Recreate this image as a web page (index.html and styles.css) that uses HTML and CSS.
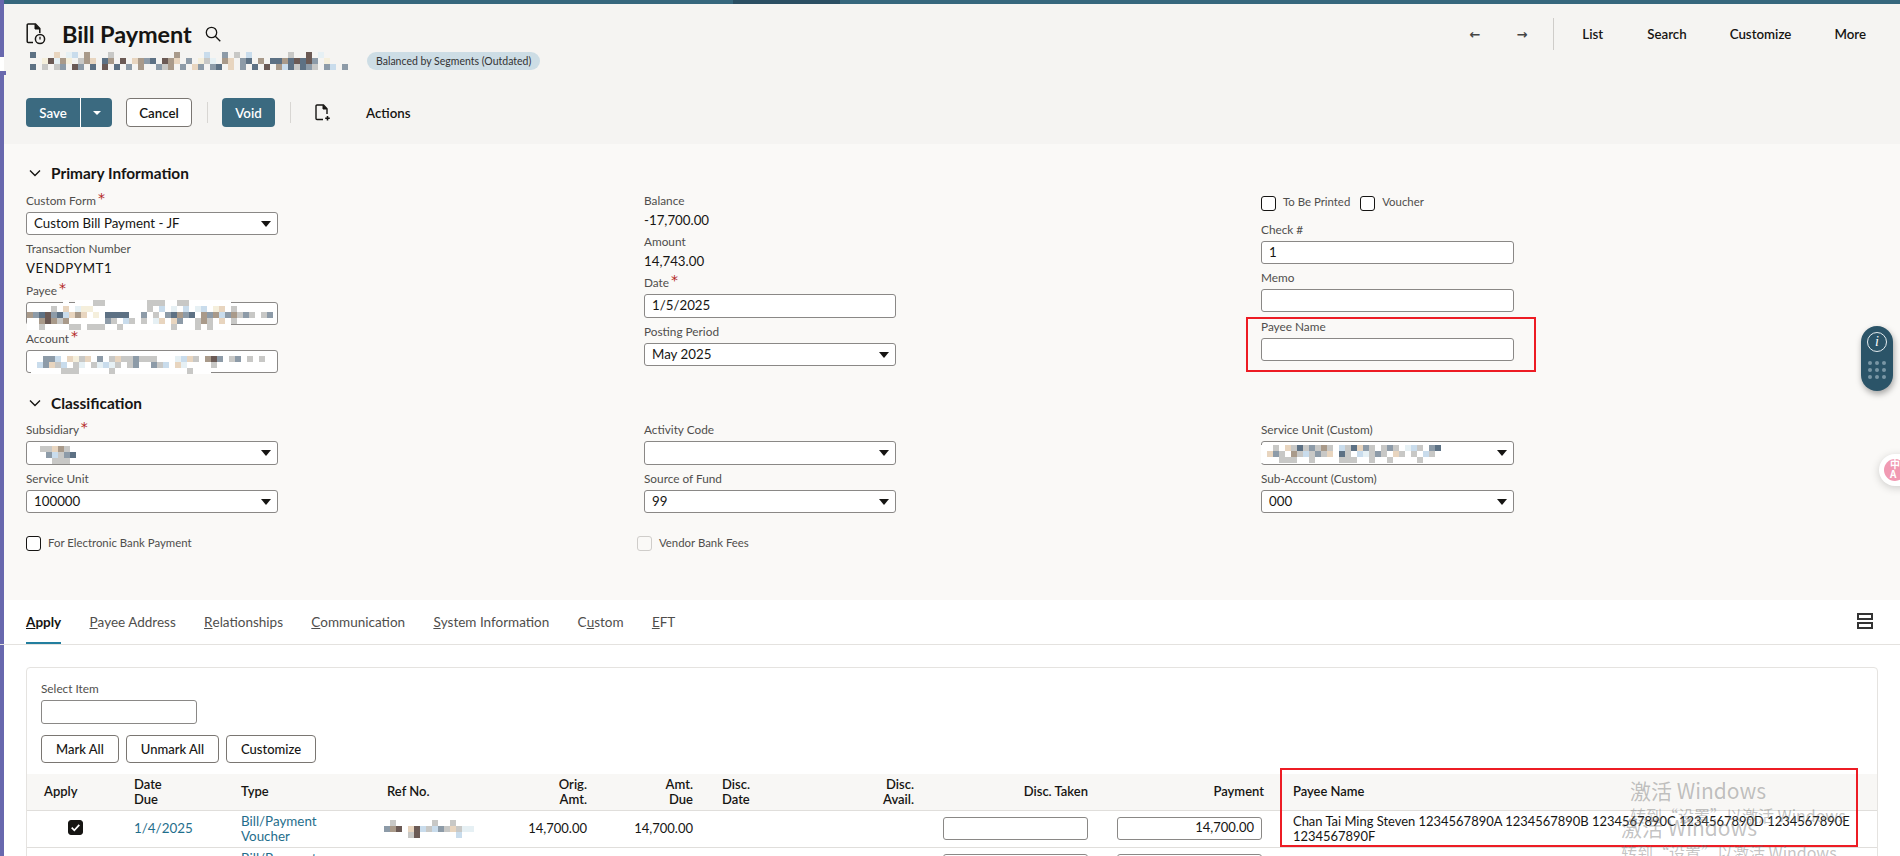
FILE: index.html
```html
<!DOCTYPE html>
<html lang="en">
<head>
    <meta charset="UTF-8">
    <title>Bill Payment</title>
    <link rel="stylesheet" href="styles.css">
</head>
<body>
    <div class="top-bar"><span class="top-bar-tab"></span></div>
    <div class="side-strip"><span class="strip-gap-a"></span><span class="strip-gap-b"></span></div>

    <header class="page-head">
        <div class="title-row">
            <div class="title-left">
                <svg class="title-icon" viewBox="0 0 20 22" fill="none" stroke="#161513" stroke-width="1.5">
                    <path d="M7 19.5H2.2a1 1 0 0 1-1-1V2a1 1 0 0 1 1-1h7.3l4.3 4.5V10"/>
                    <path d="M9 1.2V6h4.6" fill="#161513" stroke-width="1"/>
                    <circle cx="14" cy="16" r="4.6"/>
                    <path d="M14 13.7v2.9" stroke-width="1.3"/>
                </svg>
                <h1>Bill Payment</h1>
                <svg class="search-icon" viewBox="0 0 16 16" fill="none" stroke="#161513" stroke-width="1.3">
                    <circle cx="6.5" cy="6.5" r="5.2"/>
                    <path d="M10.3 10.3l5 5"/>
                </svg>
            </div>
            <nav class="head-nav">
                <span class="arrow">←</span>
                <span class="arrow arrow-next">→</span>
                <span class="nav-sep"></span>
                <a class="nav-link nav-list">List</a>
                <a class="nav-link">Search</a>
                <a class="nav-link">Customize</a>
                <a>More</a>
            </nav>
        </div>
        <div class="sub-row">
            <div class="mosaic mosaic-head" data-rows="h...c.gd.b...f..........b....d..a.f.d......f..e.g.|..iegbi.fbc.hb.e.cbah.ebc.a.ifg.bc.ah.b.hhbhehea.i.|h.f.fa.ea.h.e.h.a.b..afb.a.ca.ah.c.a.h.e.bdhfhaf.ad.a"></div>
            <span class="badge">Balanced by Segments (Outdated)</span>
        </div>
        <div class="action-row">
            <div class="split-btn">
                <button class="btn-primary btn-save">Save</button>
                <button class="btn-primary btn-caret"><span class="caret caret-white"></span></button>
            </div>
            <button class="btn-outline btn-cancel">Cancel</button>
            <span class="action-sep"></span>
            <button class="btn-primary btn-void">Void</button>
            <span class="action-sep"></span>
            <svg class="doc-icon" viewBox="0 0 16 17" fill="none" stroke="#161513" stroke-width="1.4">
                <path d="M8 15.5H2a1 1 0 0 1-1-1V2a1 1 0 0 1 1-1h6.5L12 4.7V10"/>
                <path d="M8 1.2V5h3.8" fill="#161513" stroke-width="1"/>
                <path d="M12.5 12v4.5M10.2 14.2h4.6" stroke-width="1.6"/>
            </svg>
            <span class="actions-link">Actions</span>
        </div>
    </header>

    <main class="record-form">
        <h2 class="section-title"><svg viewBox="0 0 12 8" fill="none" stroke="#161513" stroke-width="1.4"><path d="M1 1.5l5 5 5-5"/></svg>Primary Information</h2>
        <div class="form-grid">
            <div class="form-col">
                <div class="field">
                    <label>Custom Form <i class="req">*</i></label>
                    <div class="control">Custom Bill Payment - JF<span class="caret"></span></div>
                </div>
                <div class="field field-static field-static-wide">
                    <label>Transaction Number</label>
                    <div class="value value-code">VENDPYMT1</div>
                </div>
                <div class="field">
                    <label>Payee <i class="req">*</i></label>
                    <div class="control control-masked"><div class="mosaic mosaic-payee" data-rows="......w.wwwffwwwwwwwfffwwffwwwwwww........|....fwcwgiiwwwwwwwwwfwdwgwdwgdwicwfwwww.w.|baheahdcbcwiwhhhhwwawfwahbahwbabdabfafwfa|wwbebfbwwwwwwafwdfwfwgcwcawwfbfwcwfwwwwww|wwfwwwwffwfffwwfwwwwwwwwfwwwfwfwww......."></div></div>
                </div>
                <div class="field">
                    <label>Account <i class="req">*</i></label>
                    <div class="control control-masked"><div class="mosaic mosaic-account" data-rows="wwaadwcifcwawfcffafffwwwgdcfwbeawfawfwf|wdacfdwfgwfgdgfwfawwafdwcgwwwwfwwww....|wwwwwfffwwwwwfwwwwwwwwwwwwfwww........."></div></div>
                </div>
            </div>
            <div class="form-col">
                <div class="field field-static">
                    <label>Balance</label>
                    <div class="value">-17,700.00</div>
                </div>
                <div class="field field-static">
                    <label>Amount</label>
                    <div class="value">14,743.00</div>
                </div>
                <div class="field">
                    <label>Date <i class="req">*</i></label>
                    <div class="control control-tall">1/5/2025</div>
                </div>
                <div class="field">
                    <label>Posting Period</label>
                    <div class="control">May 2025<span class="caret"></span></div>
                </div>
            </div>
            <div class="form-col form-col-last">
                <div class="check-row check-row-top">
                    <span class="checkbox"></span><span class="check-label">To Be Printed</span>
                    <span class="checkbox checkbox-next"></span><span class="check-label">Voucher</span>
                </div>
                <div class="field">
                    <label>Check #</label>
                    <div class="control">1</div>
                </div>
                <div class="field field-memo">
                    <label>Memo</label>
                    <div class="control"></div>
                </div>
                <div class="field field-flagged">
                    <label>Payee Name</label>
                    <div class="control"></div>
                </div>
            </div>
        </div>

        <h2 class="section-title section-title-next"><svg viewBox="0 0 12 8" fill="none" stroke="#161513" stroke-width="1.4"><path d="M1 1.5l5 5 5-5"/></svg>Classification</h2>
        <div class="form-grid">
            <div class="form-col">
                <div class="field">
                    <label>Subsidiary <i class="req">*</i></label>
                    <div class="control control-tall control-masked"><div class="mosaic mosaic-small" data-rows="ffcbf.|.adfah|.wfffw"></div><span class="caret"></span></div>
                </div>
                <div class="field">
                    <label>Service Unit</label>
                    <div class="control">100000<span class="caret"></span></div>
                </div>
                <div class="check-row check-row-bottom">
                    <span class="checkbox"></span><span class="check-label">For Electronic Bank Payment</span>
                </div>
            </div>
            <div class="form-col">
                <div class="field">
                    <label>Activity Code</label>
                    <div class="control control-tall"><span class="caret"></span></div>
                </div>
                <div class="field">
                    <label>Source of Fund</label>
                    <div class="control">99<span class="caret"></span></div>
                </div>
                <div class="check-row check-row-bottom check-row-off">
                    <span class="checkbox checkbox-off"></span><span class="check-label">Vendor Bank Fees</span>
                </div>
            </div>
            <div class="form-col form-col-last">
                <div class="field">
                    <label>Service Unit (Custom)</label>
                    <div class="control control-tall control-masked"><div class="mosaic mosaic-unit" data-rows="wwfwcfhfafbfwdfhcafwfafwgdfwah|wcafwbfdfafcwhfwdgfafwcfwfwdfw|wwwfffwwfwwwwfffwwfwwfwwwwfwww"></div><span class="caret"></span></div>
                </div>
                <div class="field">
                    <label>Sub-Account (Custom)</label>
                    <div class="control">000<span class="caret"></span></div>
                </div>
            </div>
        </div>
    </main>

    <section class="tab-area">
        <div class="tab-bar">
            <a class="tab tab-active"><u>A</u>pply</a>
            <a class="tab"><u>P</u>ayee Address</a>
            <a class="tab"><u>R</u>elationships</a>
            <a class="tab"><u>C</u>ommunication</a>
            <a class="tab"><u>S</u>ystem Information</a>
            <a class="tab">C<u>u</u>stom</a>
            <a class="tab"><u>E</u>FT</a>
            <span class="tab-layout"><span></span><span></span></span>
        </div>

        <div class="list-panel">
            <div class="select-item">
                <label>Select Item</label>
                <div class="control control-tall"></div>
            </div>
            <div class="list-buttons">
                <button class="btn-outline">Mark All</button>
                <button class="btn-outline">Unmark All</button>
                <button class="btn-outline">Customize</button>
            </div>
            <table class="apply-table">
                <colgroup>
                    <col class="c-apply"><col class="c-date"><col class="c-type"><col class="c-ref"><col class="c-orig"><col class="c-due">
                    <col class="c-discdate"><col class="c-avail"><col class="c-taken"><col class="c-pay"><col class="c-name">
                </colgroup>
                <thead>
                    <tr>
                        <th class="pl-apply">Apply</th>
                        <th>Date<br>Due</th>
                        <th>Type</th>
                        <th>Ref No.</th>
                        <th class="num">Orig.<br>Amt.</th>
                        <th class="num">Amt.<br>Due</th>
                        <th class="pl-disc">Disc.<br>Date</th>
                        <th class="num">Disc.<br>Avail.</th>
                        <th class="num">Disc. Taken</th>
                        <th class="num th-pay">Payment</th>
                        <th class="pl-name">Payee Name</th>
                    </tr>
                </thead>
                <tbody>
                    <tr>
                        <td class="cell-check"><span class="checkbox checkbox-on"><svg viewBox="0 0 12 12" fill="none" stroke="#fff" stroke-width="1.6"><path d="M2.5 6.2l2.4 2.4 4.6-5"/></svg></span></td>
                        <td><a class="row-link">1/4/2025</a></td>
                        <td><a class="row-link row-link-type">Bill/Payment Voucher</a></td>
                        <td><div class="mosaic mosaic-ref" data-rows=".f......f..f...|abe.cedfdafcfgg|....fe......d.."></div></td>
                        <td class="num">14,700.00</td>
                        <td class="num">14,700.00</td>
                        <td></td>
                        <td></td>
                        <td class="num"><div class="control cell-input"></div></td>
                        <td class="num"><div class="control cell-input">14,700.00</div></td>
                        <td class="pl-name">Chan Tai Ming Steven 1234567890A 1234567890B 1234567890C 1234567890D 1234567890E 1234567890F</td>
                    </tr>
                    <tr>
                        <td class="cell-check"></td>
                        <td></td>
                        <td><a class="row-link row-link-type">Bill/Payment Voucher</a></td>
                        <td></td>
                        <td></td>
                        <td></td>
                        <td></td>
                        <td></td>
                        <td class="num"><div class="control cell-input"></div></td>
                        <td class="num"><div class="control cell-input"></div></td>
                        <td></td>
                    </tr>
                </tbody>
            </table>
            <div class="name-flag"></div>
        </div>
    </section>

    <div class="help-pill">
        <span class="help-info"><i>i</i></span>
        <span class="help-dots"><b></b><b></b><b></b><b></b><b></b><b></b><b></b><b></b><b></b></span>
    </div>
    <div class="lang-pill"><span>中<br>A</span></div>

    <div class="watermark wm-one"><strong>激活 Windows</strong><span>转到“设置”以激活 Windows</span></div>
    <div class="watermark wm-two"><strong>激活 Windows</strong><span>转到“设置”以激活 Windows</span></div>

    <script>
        // pixelated blocks hiding names: one letter per 6px tile, "." is empty
        const tileColors = {
            a: '#8d9ba8', b: '#a99a8a', c: '#e8d5bf', d: '#c9dcec', e: '#6b5a55',
            f: '#c8c8c6', g: '#e6f0f4', h: '#5d7184', i: '#f5efdc', w: '#ffffff'
        };

        document.querySelectorAll('.mosaic').forEach(function(box) {
            box.dataset.rows.split('|').forEach(function(row) {
                const line = document.createElement('div');
                line.className = 'mosaic-row';
                for (const ch of row) {
                    const tile = document.createElement('span');
                    if (tileColors[ch]) tile.style.background = tileColors[ch];
                    line.appendChild(tile);
                }
                box.appendChild(line);
            });
        });
    </script>
</body>
</html>
```

FILE: styles.css
```css
* {
    box-sizing: border-box;
}

html,
body {
    margin: 0;
    height: 856px;
    overflow: hidden;
}

body {
    position: relative;
    font-family: Lato, "Liberation Sans", sans-serif;
    font-size: 14px;
    color: #161513;
    background: #fff;
}

.top-bar {
    height: 4px;
    background: #36677d;
}

.top-bar-tab {
    display: block;
    width: 107px;
    height: 4px;
    margin-left: 733px;
    background: #2b4f63;
}

.side-strip {
    position: absolute;
    left: 0;
    top: 0;
    bottom: 0;
    width: 4px;
    background: #6868ae;
}

.strip-gap-a {
    position: absolute;
    left: 0;
    top: 57px;
    width: 4px;
    height: 14px;
    background: #fff;
}

.strip-gap-b {
    position: absolute;
    left: 0;
    top: 71px;
    width: 6px;
    height: 4px;
    background: #6868ae;
}

/* header band */
.page-head {
    height: 140px;
    padding: 14px 34px 0 26px;
    background: #f5f4f2;
}

.title-row {
    display: flex;
    justify-content: space-between;
}

.title-left {
    display: flex;
    align-items: center;
    height: 32px;
}

.title-icon {
    width: 20px;
    height: 22px;
    margin-right: 16px;
}

h1 {
    margin: 0 13px 0 0;
    font-size: 23.5px;
    font-weight: 700;
    letter-spacing: -0.1px;
}

.search-icon {
    width: 16px;
    height: 16px;
}

.head-nav {
    display: flex;
    align-items: center;
    height: 32px;
    font-size: 13.3px;
    font-weight: 600;
}

.arrow {
    font-size: 13px;
    color: #444;
    font-family: "DejaVu Sans", sans-serif;
}

.arrow-next {
    margin-left: 36px;
}

.nav-sep {
    width: 1px;
    height: 32px;
    margin: 0 28px 0 26px;
    background: #cfcdca;
}

.nav-link {
    margin-right: 43px;
}

.nav-list {
    margin-right: 44px;
}

.sub-row {
    display: flex;
    align-items: center;
    height: 18px;
    margin: 2px 0 0 4px;
}

.badge {
    height: 18px;
    margin-left: 17px;
    padding: 0 9px;
    border-radius: 9px;
    background: #cddde5;
    font-size: 10.5px;
    line-height: 18px;
    color: #333;
}

.action-row {
    display: flex;
    align-items: center;
    height: 29px;
    margin-top: 28px;
}

button {
    height: 29px;
    padding: 0;
    border-radius: 4px;
    font-family: inherit;
    font-size: 13.3px;
    font-weight: 600;
    cursor: pointer;
}

.btn-primary {
    border: none;
    background: #3b6a80;
    color: #fff;
}

.btn-outline {
    border: 1px solid #7a7672;
    background: #fff;
    color: #161513;
}

.split-btn {
    display: flex;
}

.btn-save {
    width: 55px;
    border-radius: 4px 0 0 4px;
    border-right: 1px solid #fff;
}

.btn-caret {
    display: flex;
    align-items: center;
    justify-content: center;
    width: 31px;
    border-radius: 0 4px 4px 0;
}

.caret {
    width: 0;
    height: 0;
    border-left: 5px solid transparent;
    border-right: 5px solid transparent;
    border-top: 6px solid #161513;
}

.caret-white {
    border-top-color: #fff;
    border-left-width: 4px;
    border-right-width: 4px;
    border-top-width: 4px;
}

.btn-cancel {
    width: 66px;
    margin-left: 14px;
}

.action-sep {
    width: 1px;
    height: 21px;
    margin: 0 14px 0 15px;
    background: #d8d6d3;
}

.btn-void {
    width: 53px;
}

.doc-icon {
    width: 16px;
    height: 17px;
    margin-left: 10px;
}

.actions-link {
    margin-left: 35px;
    font-size: 13.3px;
    font-weight: 600;
}

/* form */
.record-form {
    height: 456px;
    padding: 19px 0 0 26px;
    background: #faf9f7;
}

.section-title {
    display: flex;
    align-items: center;
    height: 20px;
    margin: 0 0 11px;
    font-size: 15.4px;
    font-weight: 700;
}

.section-title svg {
    width: 12px;
    height: 8px;
    margin: 0 10px 0 3px;
}

.section-title-next {
    margin: 13px 0 10px;
}

.form-grid {
    display: grid;
    grid-template-columns: repeat(3, 252px);
    column-gap: 366px;
}

.form-col {
    display: flex;
    flex-direction: column;
}

.form-col-last {
    margin-left: -1px;
}

.field {
    margin-bottom: 7px;
}

.field-memo {
    margin-bottom: 8px;
}

.field label,
.select-item label {
    display: block;
    height: 14px;
    margin-bottom: 4px;
    font-size: 11.8px;
    line-height: 14px;
    color: #4f4e4c;
}

.req {
    font-style: normal;
    font-family: "DejaVu Sans", sans-serif;
    font-size: 14px;
    line-height: 10px;
    color: #b3261e;
    margin-left: -1px;
    position: relative;
    top: -2px;
}

.field-static {
    margin-bottom: 5px;
}

.field-static-wide {
    margin-bottom: 6px;
}

.value {
    height: 18px;
    line-height: 16px;
    font-size: 13.3px;
}

.value-code {
    letter-spacing: 0.6px;
}

.control {
    position: relative;
    display: flex;
    align-items: center;
    height: 23px;
    padding: 0 7px 2px;
    border: 1px solid #8a8886;
    border-radius: 3px;
    background: #fff;
    font-size: 13.3px;
}

.control-tall {
    height: 24px;
}

.control .caret {
    position: absolute;
    right: 6px;
    top: 8px;
}

.control-masked {
    padding: 0;
}

.field-flagged {
    position: relative;
}

.field-flagged::after {
    content: "";
    position: absolute;
    left: -15px;
    right: -22px;
    top: -3px;
    bottom: -11px;
    border: 2px solid #ed1c24;
}

.check-row {
    display: flex;
    align-items: center;
    height: 15px;
}

.check-row-top {
    height: 14px;
    margin: 2px 0 13px;
}

.check-row-bottom {
    margin-top: 16px;
}

.check-row-off {
    margin-left: -7px;
}

.checkbox {
    display: inline-flex;
    width: 15px;
    height: 15px;
    border: 1px solid #161513;
    border-radius: 3px;
    background: #fff;
}

.checkbox-next {
    margin-left: 10px;
}

.checkbox-off {
    border-color: #cfcdca;
    background: #faf9f7;
}

.checkbox-on {
    background: #161513;
}

.check-label {
    margin: 0 0 3px 7px;
    font-size: 11.4px;
    color: #4f4e4c;
}

/* pixel blocks */
.mosaic-row {
    display: flex;
}

.mosaic-row span {
    width: 6px;
    height: 6px;
    flex: none;
}

.mosaic-head {
    width: 320px;
}

.mosaic-payee {
    margin: 3px 0 0;
}

.mosaic-account {
    margin: 6px 0 0 4px;
}

.mosaic-small {
    margin: 3px 0 0 13px;
}

.mosaic-unit {
    margin: 2px 0 0 -1px;
}

.mosaic-ref {
    width: 90px;
    margin-left: -3px;
}

/* tabs */
.tab-bar {
    display: flex;
    align-items: center;
    height: 45px;
    padding-left: 26px;
    border-bottom: 1px solid #e4e2df;
    position: relative;
}

.tab {
    display: flex;
    align-items: center;
    height: 44px;
    margin-right: 28.3px;
    font-size: 13.5px;
    color: #4f4e4c;
}

.tab-active {
    font-weight: 700;
    color: #161513;
    border-bottom: 2px solid #227e9e;
    padding-top: 2px;
}

.tab-layout {
    position: absolute;
    right: 27px;
    top: 13px;
    display: flex;
    flex-direction: column;
    gap: 2px;
}

.tab-layout span {
    width: 16px;
    height: 7px;
    background: #fff;
    border: 2px solid #333;
}

/* list */
.list-panel {
    position: relative;
    margin: 22px 22px 0 26px;
    border: 1px solid #e5e3e0;
    border-radius: 4px 4px 0 0;
    padding-top: 14px;
}

.select-item {
    width: 156px;
    margin-left: 14px;
}

.list-buttons {
    display: flex;
    gap: 7px;
    margin: 11px 0 11px 14px;
}

.list-buttons .btn-outline {
    height: 28px;
    padding: 0 14px;
    font-size: 13px;
    font-weight: 500;
}

.apply-table {
    width: 1850px;
    table-layout: fixed;
    border-collapse: collapse;
    font-size: 13px;
}

.c-apply { width: 97px; }
.c-date { width: 107px; }
.c-type { width: 146px; }
.c-ref { width: 120px; }
.c-orig { width: 100px; }
.c-due { width: 106px; }
.c-discdate { width: 100px; }
.c-avail { width: 121px; }
.c-taken { width: 174px; }
.c-pay { width: 174px; }
.c-name { width: 605px; }

.apply-table th {
    height: 36px;
    padding: 0 10px;
    background: #f8f7f5;
    border-bottom: 1px solid #e0dedb;
    font-weight: 600;
    line-height: 15px;
    text-align: left;
}

.apply-table td {
    height: 37px;
    padding: 0 10px;
    border-bottom: 1px solid #e0dedb;
    line-height: 15px;
}

.apply-table .num {
    text-align: right;
}

.apply-table .th-pay {
    padding-right: 8px;
}

.apply-table .pl-apply {
    padding-left: 17px;
}

.apply-table .pl-disc {
    padding-left: 19px;
}

.apply-table .pl-name {
    padding: 0 20px 0 21px;
    font-size: 12.95px;
}

.cell-check {
    text-align: center;
}

.row-link {
    color: #1f6e8c;
    font-size: 13.4px;
}

.row-link-type {
    display: block;
    width: 90px;
}

.cell-input {
    justify-content: flex-end;
    width: 145px;
    margin-left: auto;
    font-size: 13px;
}

.name-flag {
    position: absolute;
    left: 1253px;
    top: 100px;
    width: 578px;
    height: 79px;
    border: 2px solid #ed1c24;
}

/* floating widgets */
.help-pill {
    position: absolute;
    left: 1861px;
    top: 326px;
    width: 32px;
    height: 65px;
    padding-top: 6px;
    border-radius: 16px;
    background: #2b5468;
    box-shadow: 1px 3px 6px rgba(0, 0, 0, 0.35);
}

.help-info {
    display: flex;
    align-items: center;
    justify-content: center;
    width: 20px;
    height: 20px;
    margin: 0 auto;
    border: 1px solid #e6edf0;
    border-radius: 50%;
    color: #fff;
    font-family: "Liberation Serif", serif;
    font-size: 14px;
}

.help-dots {
    display: grid;
    grid-template-columns: repeat(3, 4px);
    gap: 3px;
    justify-content: center;
    margin-top: 9px;
}

.help-dots b {
    width: 4px;
    height: 4px;
    border-radius: 50%;
    background: #7a96a5;
}

.lang-pill {
    position: absolute;
    left: 1879px;
    top: 454px;
    width: 40px;
    height: 32px;
    padding: 5px;
    border-radius: 16px;
    background: #fff;
    box-shadow: 0 2px 8px rgba(0, 0, 0, 0.18);
}

.lang-pill span {
    display: block;
    width: 22px;
    height: 22px;
    padding-left: 6px;
    border-radius: 50%;
    background: #f19ab3;
    color: #fff;
    font-family: "Noto Sans CJK SC", sans-serif;
    font-size: 10px;
    line-height: 10px;
    font-weight: 700;
}

/* activation watermark */
.watermark {
    position: absolute;
    display: flex;
    flex-direction: column;
    color: rgba(110, 110, 110, 0.42);
    font-family: "Noto Sans CJK SC", "Noto Sans", sans-serif;
    white-space: nowrap;
}

.watermark strong {
    font-size: 21px;
    font-weight: 400;
    line-height: 28px;
}

.watermark span {
    font-size: 16px;
    line-height: 22px;
}

.wm-one {
    left: 1630px;
    top: 776px;
}

.wm-two {
    left: 1621px;
    top: 813px;
}
```
